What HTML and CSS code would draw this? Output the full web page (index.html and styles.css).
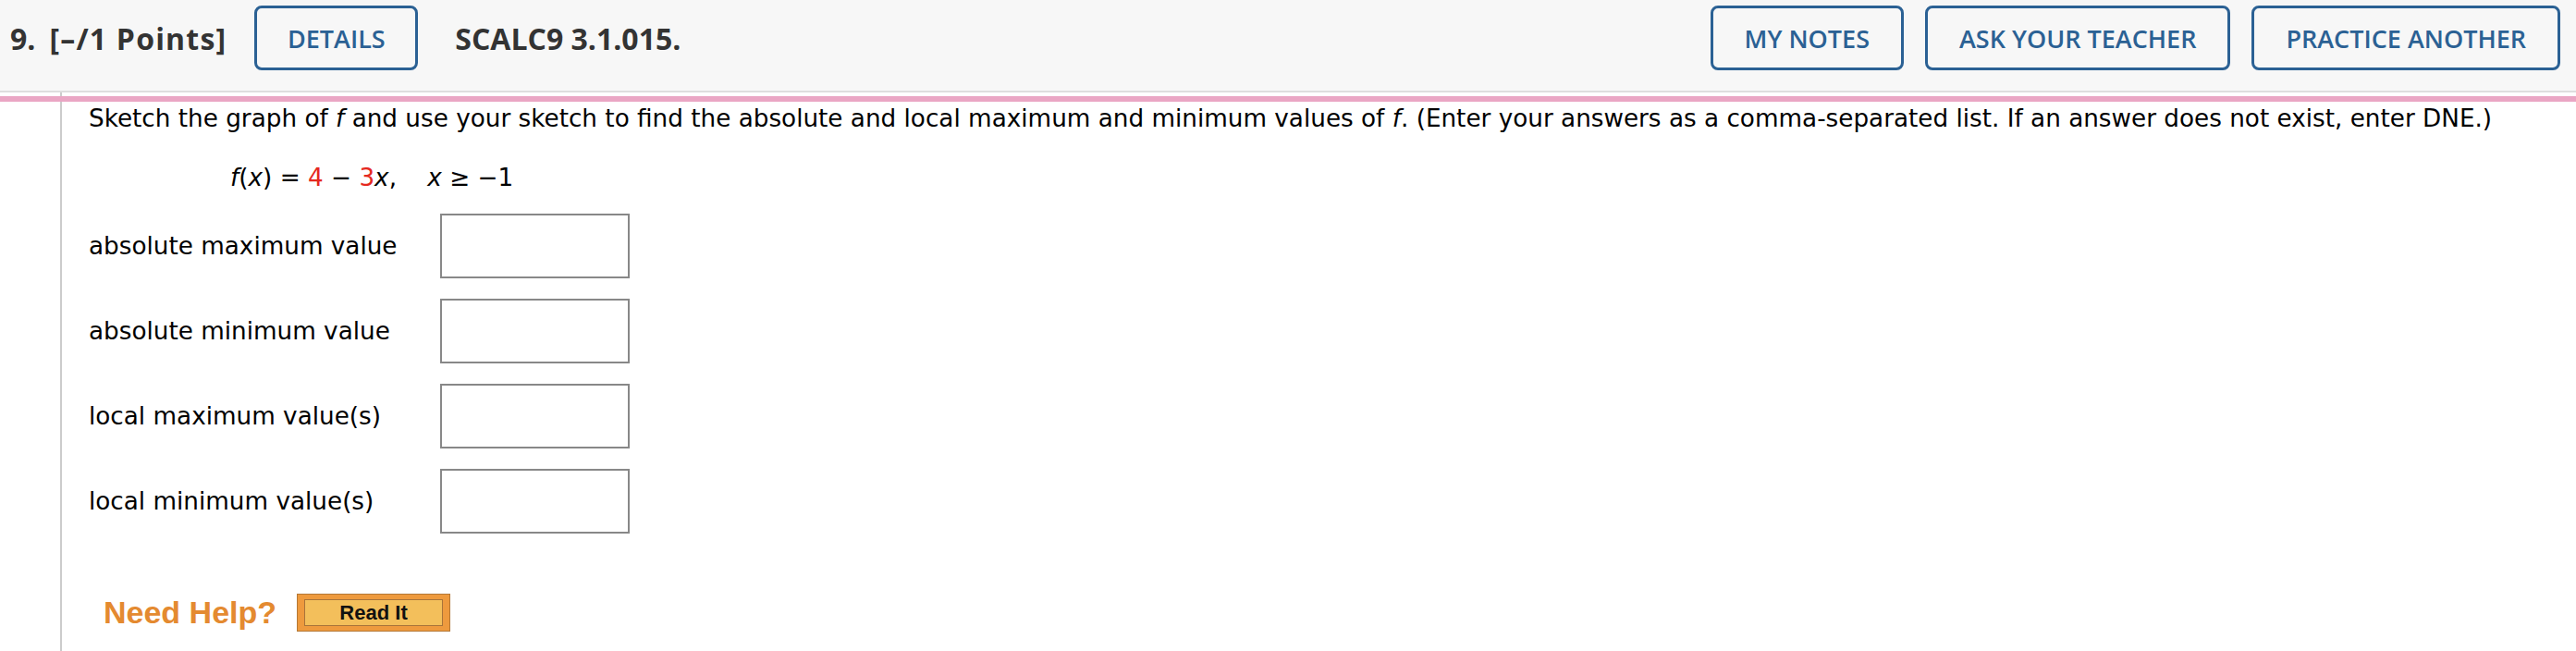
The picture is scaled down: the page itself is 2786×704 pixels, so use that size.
FILE: index.html
```html
<!DOCTYPE html>
<html lang="en">
<head>
    <meta charset="UTF-8">
    <title>SCALC9 3.1.015</title>
    <link rel="stylesheet" href="styles.css">
</head>
<body>

<div class="questionHeader">
    <span class="questionNumber">9.</span>
    <span class="questionPoints">[–/1 Points]</span>
    <button class="headerButton detailsButton">DETAILS</button>
    <span class="questionCode">SCALC9 3.1.015.</span>
    <div class="headerTools">
        <button class="headerButton">MY NOTES</button>
        <button class="headerButton">ASK YOUR TEACHER</button>
        <button class="headerButton">PRACTICE ANOTHER</button>
    </div>
</div>

<div class="gapLine"></div>
<div class="pinkBar"></div>

<div class="questionBody">
    <p class="prompt">Sketch the graph of <i>f</i> and use your sketch to find the absolute and local maximum and minimum values of <i>f</i>. (Enter your answers as a comma-separated list. If an answer does not exist, enter DNE.)</p>

    <p class="formula"><i>f</i>(<i>x</i>) = <span class="red">4</span> − <span class="red">3</span><i>x</i>,&nbsp;&nbsp;&nbsp; <i>x</i> ≥ −1</p>

    <div class="answers">
        <div class="answerRow">
            <span class="answerLabel">absolute maximum value</span>
            <input class="answerBox" type="text">
        </div>
        <div class="answerRow">
            <span class="answerLabel">absolute minimum value</span>
            <input class="answerBox" type="text">
        </div>
        <div class="answerRow">
            <span class="answerLabel">local maximum value(s)</span>
            <input class="answerBox" type="text">
        </div>
        <div class="answerRow">
            <span class="answerLabel">local minimum value(s)</span>
            <input class="answerBox" type="text">
        </div>
    </div>

    <div class="needHelp">
        <span class="needHelpText">Need Help?</span>
        <button class="readIt"><span class="readItInner">Read It</span></button>
    </div>
</div>

</body>
</html>
```

FILE: styles.css
```css
html, body {
    margin: 0;
    padding: 0;
    height: 100%;
}

body {
    background-color: #ffffff;
    font-family: 'DejaVu Sans', Verdana, sans-serif;
    color: #000000;
}

/* шапка вопроса */
.questionHeader {
    display: flex;
    align-items: center;
    height: 70px;
    padding: 6px 17px 22px 11px;
    background-color: #f7f7f7;
    border-bottom: 2px solid #dedede;
    font-family: 'Open Sans', sans-serif;
}

.questionNumber,
.questionPoints,
.questionCode {
    font-size: 32px;
    font-weight: 700;
    color: #333333;
}

.questionPoints {
    margin-left: 15px;
    letter-spacing: 1.2px;
}

.questionCode {
    margin-left: 40px;
}

.headerButton {
    height: 70px;
    padding: 0 34px;
    background-color: #f7f7f7;
    border: 3px solid #2b6194;
    border-radius: 8px;
    color: #2b6194;
    font-family: 'Open Sans', sans-serif;
    font-size: 27px;
    font-weight: 600;
    cursor: pointer;
}

.detailsButton {
    margin-left: 30px;
    width: 177px;
    padding: 0;
}

.headerTools {
    display: flex;
    gap: 23px;
    margin-left: auto;
}

/* полоса между шапкой и вопросом */
.gapLine {
    height: 4px;
    margin-left: 65px;
    border-left: 2px solid #cccccc;
}

.pinkBar {
    height: 6px;
    background-color: #eaa6c4;
}

.questionBody {
    min-height: calc(100% - 110px);
    margin-left: 65px;
    padding-left: 29px;
    border-left: 2px solid #cccccc;
    box-sizing: border-box;
    font-size: 26.25px;
}

.prompt {
    margin: 0;
    line-height: 36px;
}

.formula {
    margin: 28px 0 0 153px;
    line-height: 36px;
}

.red {
    color: #e5281e;
}

.answers {
    display: flex;
    flex-direction: column;
    gap: 22px;
    margin-top: 21px;
}

.answerRow {
    display: flex;
    align-items: center;
}

.answerLabel {
    width: 380px;
}

.answerBox {
    width: 205px;
    height: 70px;
    box-sizing: border-box;
    border: 2px solid #888888;
    background-color: #ffffff;
}

.needHelp {
    display: flex;
    align-items: center;
    margin-top: 65px;
    padding-left: 16px;
}

.needHelpText {
    font-family: 'Liberation Sans', Arial, sans-serif;
    font-size: 34px;
    font-weight: 700;
    color: #e48a30;
}

.readIt {
    margin-left: 22px;
    width: 166px;
    height: 41px;
    padding: 5px 7px;
    background-color: #ee9a3e;
    border: 1px solid #b47836;
    cursor: pointer;
}

.readItInner {
    display: block;
    height: 100%;
    box-sizing: border-box;
    background-color: #f3bf5b;
    border: 1px solid #a8743a;
    font-family: 'Liberation Sans', Arial, sans-serif;
    font-size: 22px;
    font-weight: 700;
    line-height: 27px;
    color: #111111;
}
```
